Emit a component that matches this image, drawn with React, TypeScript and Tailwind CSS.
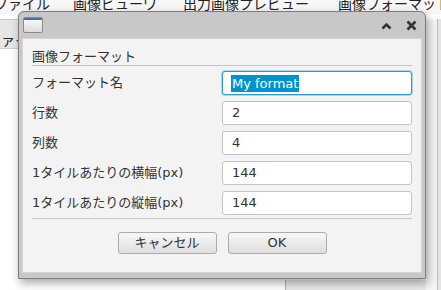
import React from 'react'

const rows = [
  { label: 'フォーマット名', value: 'My format', focused: true },
  { label: '行数', value: '2' },
  { label: '列数', value: '4' },
  { label: '1タイルあたりの横幅(px)', value: '144' },
  { label: '1タイルあたりの縦幅(px)', value: '144' },
]

function WindowIcon() {
  return (
    <div className="w-[20px] h-[16px] rounded-[2px] border border-[#8a8a8a] bg-gradient-to-b from-[#fdfdfd] to-[#dcdcdc] overflow-hidden">
      <div className="h-[2px] bg-[#4a6fa8]" />
    </div>
  )
}

export default function App() {
  return (
    <div className="relative w-[441px] h-[290px] overflow-hidden bg-white text-[#333] font-['DejaVu_Sans','Noto_Sans_CJK_JP',sans-serif]">
      {/* background app */}
      <div className="h-[14px] overflow-hidden bg-[#f7f7f7]">
        <div className="flex -ml-[6px] -mt-[5px] text-[14px] leading-[18px] text-[#222] whitespace-nowrap">
          <span className="shrink-0 w-[79px]">ファイル</span>
          <span className="shrink-0 w-[110px]">画像ビューワ</span>
          <span className="shrink-0 w-[155px]">出力画像プレビュー</span>
          <span className="shrink-0">画像フォーマット</span>
        </div>
      </div>
      <div className="h-[5px] bg-white" />
      <div className="h-[30px] bg-[#e6e6e6] border-t border-[#c9c9c9] border-b border-b-[#d0d0d0] flex overflow-hidden">
        <div className="-ml-[13px] pt-[12px] text-[14px] leading-[16px] text-[#222] whitespace-nowrap">ファイル</div>
      </div>
      <div className="absolute right-0 top-[19px] w-[15px] h-[271px] bg-[#f4f4f4] flex">
        <div className="w-[11px] h-full" />
        <div className="w-[1px] h-full bg-[#bdbdbd]" />
        <div className="flex-1 bg-[#e4e4e4]" />
      </div>
      <div className="absolute left-[285px] top-[280px] w-[141px] h-[10px] border-l border-[#b0b0b0] bg-[#e9e9e9]" />

      {/* dialog */}
      <div className="absolute left-[18px] top-[11px] w-[408px] h-[268px] rounded-t-[6px] border border-[#7d7d7d] bg-[#c8c8c8] shadow-[2px_4px_10px_rgba(0,0,0,0.35)] flex flex-col">
        <div className="h-[26px] flex items-center pl-[4px] pr-[8px]">
          <WindowIcon />
          <div className="flex-1" />
          <svg width="11" height="8" viewBox="0 0 11 8" className="mr-[14px] mt-[2px]">
            <path d="M1.5 6.5 L5.5 2.5 L9.5 6.5" fill="none" stroke="#333" strokeWidth="2.6" />
          </svg>
          <svg width="11" height="11" viewBox="0 0 11 11" className="mt-[1px]">
            <path d="M1.5 1.5 L9.5 9.5 M9.5 1.5 L1.5 9.5" fill="none" stroke="#333" strokeWidth="2.6" />
          </svg>
        </div>
        <div className="flex-1 mx-[3px] mb-[5px] bg-[#f3f3f3] border border-[#d6d6d6] px-[9px] pt-[9px] text-[13px]">
          <div className="leading-[17px] border-b border-[#c4c4c4]">画像フォーマット</div>
          <div className="mt-[5px] flex flex-col gap-[6px]">
            {rows.map(r => (
              <div key={r.label} className="flex items-center h-[24px]">
                <div className="flex-1 whitespace-nowrap">{r.label}</div>
                {r.focused ? (
                  <div className="w-[190px] h-[24px] rounded-[3px] border border-[#2a9ad8] shadow-[0_0_0_1px_#a9d7f1] bg-white flex items-center pl-[8px]">
                    <span className="bg-[#0093cf] text-white leading-[17px] px-[1px]">{r.value}</span>
                  </div>
                ) : (
                  <div className="w-[190px] h-[24px] rounded-[3px] border border-[#c4c4c4] bg-white flex items-center pl-[9px]">
                    {r.value}
                  </div>
                )}
              </div>
            ))}
          </div>
          <div className="mt-[3px] border-t border-[#c4c4c4]" />
          <div className="mt-[13px] flex justify-center gap-[11px]">
            <button className="w-[99px] h-[22px] rounded-[3px] border border-[#ababab] bg-gradient-to-b from-[#f8f8f8] to-[#dedede] text-[13px] text-[#333]">キャンセル</button>
            <button className="w-[99px] h-[22px] rounded-[3px] border border-[#ababab] bg-gradient-to-b from-[#f8f8f8] to-[#dedede] text-[13px] text-[#333]">OK</button>
          </div>
        </div>
      </div>
    </div>
  )
}
